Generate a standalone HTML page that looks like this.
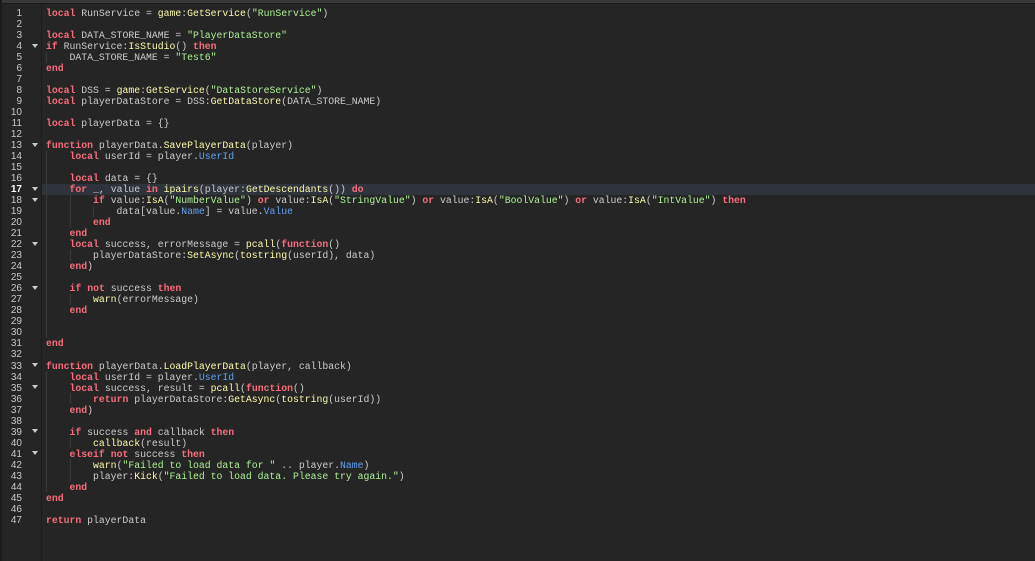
<!DOCTYPE html>
<html><head><meta charset="utf-8"><style>
html,body{margin:0;padding:0;}
body{width:1035px;height:561px;background:#252525;overflow:hidden;position:relative;font-family:"Liberation Mono",monospace;}
.top{position:absolute;left:0;top:0;width:1035px;height:3px;background:#383838;border-bottom:1px solid #1a1a1a;}
.left{position:absolute;left:0;top:0;width:2px;height:561px;background:#1a1a1a;}
.sep{position:absolute;left:41px;top:4px;width:1px;height:557px;background:#1c1c1c;}
.hl{position:absolute;left:42px;top:183.8px;width:993px;height:11px;background:#2f333b;}
.nums{position:absolute;left:2px;top:8px;width:20px;text-align:right;color:#c8c8c8;font-size:10px;line-height:11.02px;white-space:pre;font-family:"Liberation Sans",sans-serif;}
.code{position:absolute;left:46px;top:8px;color:#cccccc;font-size:9.8px;line-height:11.02px;white-space:pre;}
.k{color:#f86d7c;font-weight:bold}
.s{color:#adf195}
.f{color:#fdfbac}
.p{color:#61a1f1}
.ar{position:absolute;left:32px;width:0;height:0;border-left:3px solid transparent;border-right:3px solid transparent;border-top:4px solid #cccccc;}
.g{position:absolute;width:1px;background:#3a3a3a;}
</style></head><body>
<div class="top"></div><div class="left"></div><div class="sep"></div>
<div class="hl"></div>
<div class="nums">1
2
3
4
5
6
7
8
9
10
11
12
13
14
15
16
<b style="color:#fff">17</b>
18
19
20
21
22
23
24
25
26
27
28
29
30
31
32
33
34
35
36
37
38
39
40
41
42
43
44
45
46
47</div>
<div class="ar" style="top:44px"></div>
<div class="ar" style="top:143px"></div>
<div class="ar" style="top:187px"></div>
<div class="ar" style="top:198px"></div>
<div class="ar" style="top:242px"></div>
<div class="ar" style="top:286px"></div>
<div class="ar" style="top:363px"></div>
<div class="ar" style="top:385px"></div>
<div class="ar" style="top:429px"></div>
<div class="ar" style="top:451px"></div>
<div class="g" style="left:46px;top:52px;height:11px"></div>
<div class="g" style="left:46px;top:151px;height:187px"></div>
<div class="g" style="left:70px;top:195px;height:33px"></div>
<div class="g" style="left:93px;top:206px;height:11px"></div>
<div class="g" style="left:70px;top:250px;height:11px"></div>
<div class="g" style="left:70px;top:294px;height:11px"></div>
<div class="g" style="left:46px;top:371px;height:121px"></div>
<div class="g" style="left:70px;top:393px;height:11px"></div>
<div class="g" style="left:70px;top:437px;height:11px"></div>
<div class="g" style="left:70px;top:459px;height:22px"></div>
<div class="code"><span class="k">local</span> RunService = <span class="f">game</span>:<span class="f">GetService</span>(<span class="s">"RunService"</span>)

<span class="k">local</span> DATA_STORE_NAME = <span class="s">"PlayerDataStore"</span>
<span class="k">if</span> RunService:<span class="f">IsStudio</span>() <span class="k">then</span>
    DATA_STORE_NAME = <span class="s">"Test6"</span>
<span class="k">end</span>

<span class="k">local</span> DSS = <span class="f">game</span>:<span class="f">GetService</span>(<span class="s">"DataStoreService"</span>)
<span class="k">local</span> playerDataStore = DSS:<span class="f">GetDataStore</span>(DATA_STORE_NAME)

<span class="k">local</span> playerData = {}

<span class="k">function</span> playerData.<span class="f">SavePlayerData</span>(player)
    <span class="k">local</span> userId = player.<span class="p">UserId</span>

    <span class="k">local</span> data = {}
    <span class="k">for</span> _, value <span class="k">in</span> <span class="f">ipairs</span>(player:<span class="f">GetDescendants</span>()) <span class="k">do</span>
        <span class="k">if</span> value:<span class="f">IsA</span>(<span class="s">"NumberValue"</span>) <span class="k">or</span> value:<span class="f">IsA</span>(<span class="s">"StringValue"</span>) <span class="k">or</span> value:<span class="f">IsA</span>(<span class="s">"BoolValue"</span>) <span class="k">or</span> value:<span class="f">IsA</span>(<span class="s">"IntValue"</span>) <span class="k">then</span>
            data[value.<span class="p">Name</span>] = value.<span class="p">Value</span>
        <span class="k">end</span>
    <span class="k">end</span>
    <span class="k">local</span> success, errorMessage = <span class="f">pcall</span>(<span class="k">function</span>()
        playerDataStore:<span class="f">SetAsync</span>(<span class="f">tostring</span>(userId), data)
    <span class="k">end</span>)

    <span class="k">if</span> <span class="k">not</span> success <span class="k">then</span>
        <span class="f">warn</span>(errorMessage)
    <span class="k">end</span>


<span class="k">end</span>

<span class="k">function</span> playerData.<span class="f">LoadPlayerData</span>(player, callback)
    <span class="k">local</span> userId = player.<span class="p">UserId</span>
    <span class="k">local</span> success, result = <span class="f">pcall</span>(<span class="k">function</span>()
        <span class="k">return</span> playerDataStore:<span class="f">GetAsync</span>(<span class="f">tostring</span>(userId))
    <span class="k">end</span>)

    <span class="k">if</span> success <span class="k">and</span> callback <span class="k">then</span>
        <span class="f">callback</span>(result)
    <span class="k">elseif</span> <span class="k">not</span> success <span class="k">then</span>
        <span class="f">warn</span>(<span class="s">"Failed to load data for "</span> .. player.<span class="p">Name</span>)
        player:<span class="f">Kick</span>(<span class="s">"Failed to load data. Please try again."</span>)
    <span class="k">end</span>
<span class="k">end</span>

<span class="k">return</span> playerData</div>
</body></html>
